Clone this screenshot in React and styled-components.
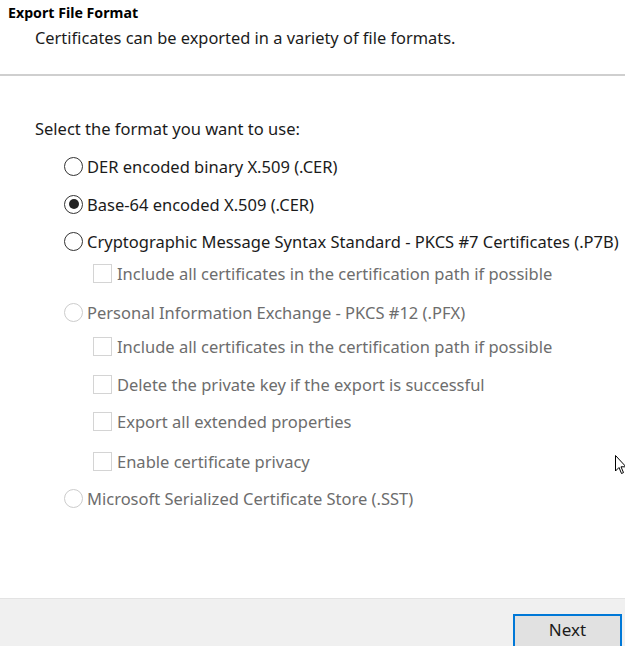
import React from "react";
import styled, { createGlobalStyle } from "styled-components";

const Global = createGlobalStyle`
  html, body { margin: 0; padding: 0; background: #fff; }
  body { font-family: "Noto Sans", "DejaVu Sans", sans-serif; }
`;

const Page = styled.div`
  position: relative;
  width: 625px;
  height: 646px;
  overflow: hidden;
  display: flex;
  flex-direction: column;
  background: #fff;
  color: #1b1b1b;
`;

const Header = styled.div`
  display: flex;
  flex-direction: column;
  gap: 5px;
  padding: 4px 8px 25px 8px;
`;

const Title = styled.div`
  font-weight: 700;
  font-size: 14.2px;
  line-height: 18px;
  color: #000;
`;

const Subtitle = styled.div`
  font-size: 16.4px;
  line-height: 22px;
  padding-left: 27px;
`;

const Separator = styled.div`
  height: 2px;
  background: #cfcfcf;
  flex: none;
`;

const Content = styled.div`
  flex: 1;
  display: flex;
  flex-direction: column;
  padding: 41px 0 0 35px;
`;

const Row = styled.div`
  display: flex;
  align-items: center;
  height: 22px;
  margin-top: ${(p) => p.$mt || 0}px;
  margin-left: ${(p) => p.$indent || 0}px;
  font-size: 16.5px;
  color: ${(p) => (p.$disabled ? "#6d6d6d" : "#1b1b1b")};
  white-space: nowrap;
`;

const Radio = styled.span`
  flex: none;
  box-sizing: border-box;
  width: 19px;
  height: 19px;
  border-radius: 50%;
  border: 1.5px solid ${(p) => (p.$disabled ? "#cccccc" : "#333333")};
  margin-right: 4px;
  display: flex;
  align-items: center;
  justify-content: center;
  &::after {
    content: "";
    display: ${(p) => (p.$checked ? "block" : "none")};
    width: 10px;
    height: 10px;
    border-radius: 50%;
    background: #222;
  }
`;

const Check = styled.span`
  flex: none;
  box-sizing: border-box;
  width: 19px;
  height: 19px;
  border: 1.5px solid #d4d4d4;
  background: #fff;
  margin-right: 5px;
`;

const Footer = styled.div`
  flex: none;
  box-sizing: border-box;
  height: 48px;
  background: #f0f0f0;
  border-top: 1px solid #e3e3e3;
  display: flex;
  justify-content: flex-end;
  align-items: flex-start;
  padding: 15px 3px 0 0;
`;

const Button = styled.button`
  flex: none;
  box-sizing: border-box;
  width: 109px;
  height: 36px;
  background: #e1e1e1;
  border: 2px solid #0078d7;
  font-family: "Noto Sans", "DejaVu Sans", sans-serif;
  font-size: 17px;
  color: #1b1b1b;
  padding: 0;
  display: flex;
  justify-content: center;
  align-items: flex-start;
  line-height: 28px;
`;

const Cursor = styled.svg`
  position: absolute;
  left: 615px;
  top: 455px;
`;

const items = [
  { type: "label", text: "Select the format you want to use:", mt: 0 },
  { type: "radio", text: "DER encoded binary X.509 (.CER)", mt: 16 },
  { type: "radio", text: "Base-64 encoded X.509 (.CER)", mt: 16, checked: true },
  { type: "radio", text: "Cryptographic Message Syntax Standard - PKCS #7 Certificates (.P7B)", mt: 15 },
  { type: "check", text: "Include all certificates in the certification path if possible", mt: 10, disabled: true },
  { type: "radio", text: "Personal Information Exchange - PKCS #12 (.PFX)", mt: 17, disabled: true },
  { type: "check", text: "Include all certificates in the certification path if possible", mt: 12, disabled: true },
  { type: "check", text: "Delete the private key if the export is successful", mt: 16, disabled: true },
  { type: "check", text: "Export all extended properties", mt: 15, disabled: true },
  { type: "check", text: "Enable certificate privacy", mt: 18, disabled: true },
  { type: "radio", text: "Microsoft Serialized Certificate Store (.SST)", mt: 15, disabled: true },
];

export default function App() {
  return (
    <>
      <Global />
      <Page>
        <Header>
          <Title>Export File Format</Title>
          <Subtitle>Certificates can be exported in a variety of file formats.</Subtitle>
        </Header>
        <Separator />
        <Content>
          {items.map((it, i) => (
            <Row
              key={i}
              $mt={it.mt}
              $indent={it.type === "radio" ? 29 : it.type === "check" ? 58 : 0}
              $disabled={it.disabled}
            >
              {it.type === "radio" && <Radio $checked={it.checked} $disabled={it.disabled} />}
              {it.type === "check" && <Check />}
              {it.text}
            </Row>
          ))}
        </Content>
        <Footer>
          <Button>Next</Button>
        </Footer>
        <Cursor width="12" height="20" viewBox="0 0 12 20">
          <path d="M0.5 0.5 L0.5 16 L4 12.5 L6.5 18.5 L8.5 17.6 L6 11.8 L11 11.8 Z" fill="#fff" stroke="#000" strokeWidth="1" />
        </Cursor>
      </Page>
    </>
  );
}
